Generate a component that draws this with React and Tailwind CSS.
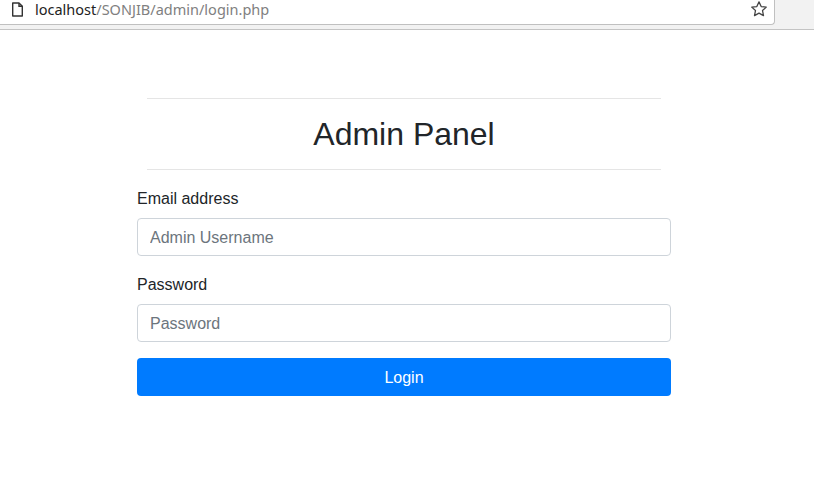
import React from "react";

function Field({ label, placeholder, type, className }) {
  return (
    <div className={className}>
      <label className="block mb-[7px] h-6 leading-6 text-[16px] text-[#212529]">{label}</label>
      <input
        type={type}
        placeholder={placeholder}
        className="block w-full h-[38px] px-3 pt-[2px] text-[16px] bg-white border border-[#ced4da] rounded-[4px] outline-none placeholder:text-[#6c757d]"
      />
    </div>
  );
}

export default function App() {
  return (
    <div className="w-[814px] h-[489px] overflow-hidden bg-white font-['Liberation_Sans',sans-serif]">
      <div className="flex h-[30px] bg-[#f2f2f2] border-b border-[#c4c4c4]">
        <div className="flex items-center w-[775px] h-[25px] bg-white border-r border-b border-[#c0c0c0] rounded-br-[4px] pl-[11px] pr-[6px]">
          <svg width="13" height="15" viewBox="0 0 13 15" fill="none" stroke="#333" strokeWidth="1.4" className="-mt-[6px]">
            <path d="M1.7 1h6.3l3.3 3.3v9.7h-9.6z" strokeLinejoin="round" />
            <path d="M8 1v3.3h3.3" />
          </svg>
          <div className="ml-[11px] -mt-[6px] text-[14.5px] leading-[18px] font-['Noto_Sans',sans-serif] text-[#808080]">
            <span className="text-[#222]">localhost</span>/SONJIB/admin/login.php
          </div>
          <svg width="18" height="18" viewBox="0 0 24 24" fill="none" stroke="#444" strokeWidth="1.7" strokeLinejoin="round" className="ml-auto -mt-[6px]">
            <path d="M12 2.5l2.9 6.2 6.8.8-5 4.6 1.3 6.7-6-3.3-6 3.3 1.3-6.7-5-4.6 6.8-.8z" />
          </svg>
        </div>
      </div>
      <div className="w-[534px] ml-[137px] pt-[68px]">
        <div className="ml-[10px] w-[514px] h-[72px] border-y border-[#e5e5e5] flex items-center justify-center">
          <h2 className="text-[32px] leading-[38px] text-[#212529]">Admin Panel</h2>
        </div>
        <div className="mt-[17px]">
          <Field className="mb-[17px]" label="Email address" placeholder="Admin Username" type="text" />
          <Field className="mb-4" label="Password" placeholder="Password" type="password" />
          <button className="block w-full h-[38px] pt-[2px] text-[16px] text-white bg-[#007bff] rounded-[4px]">Login</button>
        </div>
      </div>
    </div>
  );
}
